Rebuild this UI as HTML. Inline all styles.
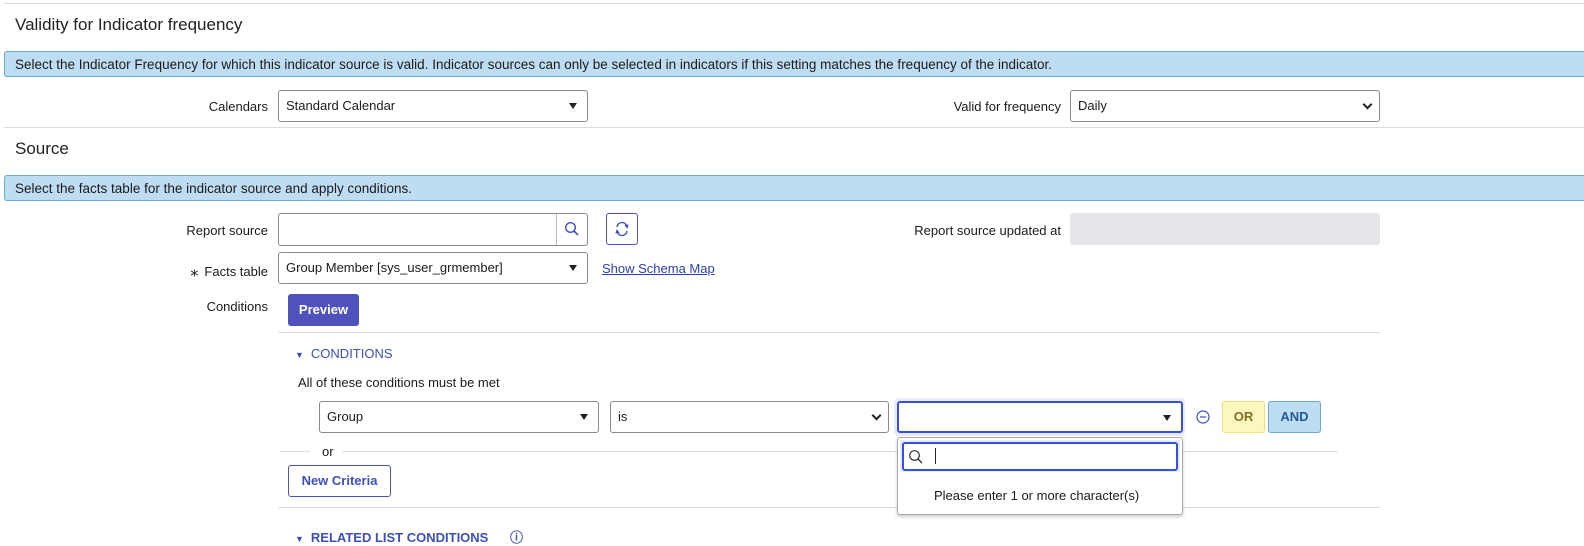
<!DOCTYPE html>
<html><head><style>
body{margin:0;width:1584px;height:538px;overflow:hidden;background:#fff;font-family:"Liberation Sans",sans-serif;font-size:13px;color:#1b1b1b;position:relative}
.a{position:absolute}
.hr{position:absolute;height:1px;background:#dcdcdc}
.ban{position:absolute;left:4px;right:0;height:26px;background:#bfddf2;border:1px solid #6ea9d6;border-right:none;border-radius:3px 0 0 3px;line-height:25px;padding-left:10px;box-sizing:border-box;font-size:13.5px}
.h{position:absolute;left:15px;font-size:17px;color:#222}
.lbl{position:absolute;text-align:right;font-size:13px}
.box{position:absolute;border:1px solid #8a8a8a;border-radius:3px;background:#fff;box-sizing:border-box;line-height:29px;padding-left:7px;font-size:13px}
.tri{position:absolute;right:10px;top:12px;width:0;height:0;border-left:4px solid transparent;border-right:4px solid transparent;border-top:6px solid #222}
.chev{position:absolute;right:8px;top:10px;width:5px;height:5px;border-right:2px solid #222;border-bottom:2px solid #222;transform:rotate(45deg)}
</style></head><body>
<div class="hr" style="left:4px;right:0;top:3px"></div>
<div class="h" style="top:15px">Validity for Indicator frequency</div>
<div class="ban" style="top:51px">Select the Indicator Frequency for which this indicator source is valid. Indicator sources can only be selected in indicators if this setting matches the frequency of the indicator.</div>
<div class="lbl" style="right:1316px;top:99px">Calendars</div>
<div class="box" style="left:278px;top:90px;width:310px;height:32px">Standard Calendar<div class="tri"></div></div>
<div class="lbl" style="right:523px;top:99px">Valid for frequency</div>
<div class="box" style="left:1070px;top:90px;width:310px;height:32px">Daily<div class="chev"></div></div>
<div class="hr" style="left:4px;right:0;top:127px"></div>
<div class="h" style="top:139px">Source</div>
<div class="ban" style="top:175px">Select the facts table for the indicator source and apply conditions.</div>
<div class="lbl" style="right:1316px;top:223px">Report source</div>
<div class="box" style="left:278px;top:213px;width:310px;height:33px"></div>
<div class="a" style="left:556px;top:214px;width:1px;height:31px;background:#bbb"></div>
<svg class="a" style="left:564px;top:221px" width="16" height="16" viewBox="0 0 16 16"><circle cx="6.5" cy="6.5" r="4.8" fill="none" stroke="#3d4fbf" stroke-width="1.4"/><line x1="10" y1="10" x2="14" y2="14" stroke="#3d4fbf" stroke-width="1.6"/></svg>
<div class="a" style="left:606px;top:213px;width:32px;height:32px;border:1px solid #4f52bd;border-radius:3px;box-sizing:border-box"></div>
<svg class="a" style="left:614px;top:221px" width="16" height="16" viewBox="0 0 16 16"><path d="M3 9A5 5 0 0 0 13 10M13 7A5 5 0 0 0 3 6" fill="none" stroke="#3d4fbf" stroke-width="1.3"/><path d="M11 4l2 2.5 1-3M5 12l-2-2.5-1 3" fill="none" stroke="#3d4fbf" stroke-width="1.2"/></svg>
<div class="lbl" style="right:523px;top:223px">Report source updated at</div>
<div class="a" style="left:1070px;top:213px;width:310px;height:32px;background:#e5e6e9;border-radius:3px"></div>
<div class="lbl" style="right:1316px;top:261px"><span style="font-size:16px;margin-right:6px">⁎</span>Facts table</div>
<div class="box" style="left:278px;top:252px;width:310px;height:32px">Group Member [sys_user_grmember]<div class="tri"></div></div>
<div class="a" style="left:602px;top:261px;color:#2b3dbf;text-decoration:underline">Show Schema Map</div>
<div class="lbl" style="right:1316px;top:299px">Conditions</div>
<div class="a" style="left:288px;top:294px;width:71px;height:32px;background:#4f52bd;border-radius:3px;color:#fff;font-weight:bold;text-align:center;line-height:32px">Preview</div>
<div class="hr" style="left:278px;width:1102px;top:332px"></div>
<div class="a" style="left:295px;top:346px;color:#3d4fbf;font-size:13px"><span style="font-size:9px;margin-right:7px">▼</span>CONDITIONS</div>
<div class="a" style="left:298px;top:375px">All of these conditions must be met</div>
<div class="box" style="left:319px;top:401px;width:280px;height:32px">Group<div class="tri"></div></div>
<div class="box" style="left:610px;top:401px;width:279px;height:32px">is<div class="chev"></div></div>
<div class="a" style="left:894px;top:398px;width:291px;height:38px;background:#e8ebfb;border-radius:4px"></div>
<div class="box" style="left:897px;top:401px;width:286px;height:32px;border:2px solid #3550e0"><div class="tri"></div></div>
<svg class="a" style="left:1195px;top:409px" width="16" height="16"><circle cx="8" cy="8" r="6" fill="none" stroke="#3d4fbf" stroke-width="1.2"/><line x1="5" y1="8" x2="11" y2="8" stroke="#3d4fbf" stroke-width="1.2"/></svg>
<div class="a" style="left:1222px;top:401px;width:43px;height:32px;background:#fcf6bf;border:1px solid #ece27a;border-radius:3px;box-sizing:border-box;color:#7f7220;font-weight:bold;text-align:center;line-height:30px">OR</div>
<div class="a" style="left:1268px;top:401px;width:53px;height:32px;background:#bfddf2;border:1px solid #6ea9d6;border-radius:3px;box-sizing:border-box;color:#1f5c98;font-weight:bold;text-align:center;line-height:30px">AND</div>
<div class="hr" style="left:280px;width:30px;top:451px"></div>
<div class="a" style="left:322px;top:444px">or</div>
<div class="hr" style="left:342px;width:996px;top:451px"></div>
<div class="a" style="left:288px;top:465px;width:103px;height:32px;border:1px solid #4f52bd;border-radius:3px;box-sizing:border-box;color:#3d4fbf;font-weight:bold;text-align:center;line-height:30px">New Criteria</div>
<div class="hr" style="left:278px;width:1102px;top:507px"></div>
<div class="a" style="left:295px;top:527px;color:#3d4fbf;font-weight:bold"><span style="font-size:9px;margin-right:7px">▼</span>RELATED LIST CONDITIONS <span style="margin-left:18px">ⓘ</span></div>
<div class="a" style="left:897px;top:437px;width:286px;height:78px;background:#fff;border:1px solid #aaa;border-radius:3px;box-sizing:border-box;box-shadow:0 2px 3px rgba(0,0,0,.2)"></div>
<div class="a" style="left:900px;top:440px;width:280px;height:32px;background:#e8ebfb"></div>
<div class="a" style="left:902px;top:442px;width:276px;height:29px;border:2px solid #3550e0;border-radius:3px;background:#fff;box-sizing:border-box"></div>
<svg class="a" style="left:908px;top:449px" width="16" height="16"><circle cx="6.5" cy="6.5" r="4.8" fill="none" stroke="#333" stroke-width="1.2"/><line x1="10" y1="10" x2="14" y2="14" stroke="#333" stroke-width="1.4"/></svg>
<div class="a" style="left:935px;top:448px;width:1px;height:16px;background:#222"></div>
<div class="a" style="left:934px;top:488px">Please enter 1 or more character(s)</div>
</body></html>
